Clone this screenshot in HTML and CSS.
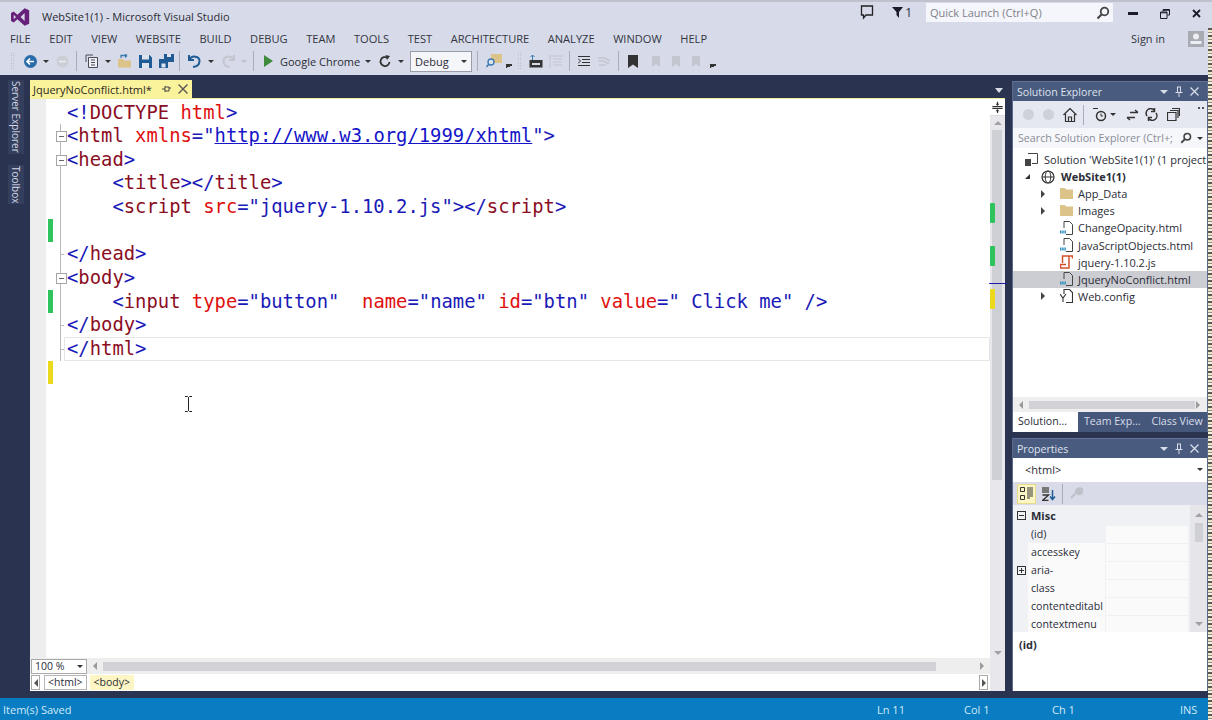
FILE: index.html
```html
<!DOCTYPE html>
<html lang="en">
<head>
    <meta charset="UTF-8">
    <meta name="viewport" content="width=device-width, initial-scale=1.0">
    <title>WebSite1(1) - Microsoft Visual Studio</title>
    <link rel="stylesheet" href="styles.css">
</head>
<body>
    <div class="titlebar">
        <svg class="logo" width="20" height="20" viewBox="0 0 22 20"><path d="M0 5.500 L3 4 L7 7.500 L15 0.500 L20 2.500 V17.500 L15 19.500 L7 12.500 L3 16 L0 14.500 Z M3 7.500 V12.500 L5.500 10 Z M15 5.500 L10.500 10 L15 14.500 Z" fill="#68217a" fill-rule="evenodd"/></svg>
        <span class="app-title">WebSite1(1) - Microsoft Visual Studio</span>
        <div class="title-right">
            <svg class="t-feedback" width="14" height="15" viewBox="0 0 14 15"><path d="M1.500 1 H12.500 V10 H6 L3.500 13 V10 H1.500 Z" fill="none" stroke="#222" stroke-width="1.300"/></svg>
            <svg class="t-filter" width="11" height="11" viewBox="0 0 11 11"><path d="M0 0 H11 L7 5 V11 L4.500 8 V5 Z" fill="#1b1b2a"/></svg>
            <span class="t-count">1</span>
            <div class="quick">
                <span>Quick Launch (Ctrl+Q)</span>
                <svg width="14" height="14" viewBox="0 0 14 14"><circle cx="8.500" cy="5.500" r="3.800" fill="none" stroke="#444" stroke-width="1.800"/><path d="M6 8 L1.500 12.500" stroke="#444" stroke-width="2.200"/></svg>
            </div>
            <div class="winbtns">
                <svg width="10" height="3" viewBox="0 0 10 3"><rect width="10" height="3" fill="#1b1b2a"/></svg>
                <svg width="10" height="10" viewBox="0 0 10 10"><path d="M3 2.500 V0.500 H9.500 V6 H7.500 M0.500 3 H7 V9.500 H0.500 Z M0.500 3.800 H7 M3 1.300 H9.500" fill="none" stroke="#1b1b2a"/></svg>
                <svg width="9" height="9" viewBox="0 0 9 9"><path d="M1 1 L8 8 M8 1 L1 8" stroke="#1b1b2a" stroke-width="1.800"/></svg>
            </div>
        </div>
    </div>

    <div class="menubar">
        <span>FILE</span><span>EDIT</span><span>VIEW</span><span>WEBSITE</span><span>BUILD</span><span>DEBUG</span><span>TEAM</span><span>TOOLS</span><span>TEST</span><span>ARCHITECTURE</span><span>ANALYZE</span><span>WINDOW</span><span>HELP</span>
        <div class="signin">
            <span>Sign in</span>
            <svg width="16" height="16" viewBox="0 0 16 16"><rect width="16" height="16" fill="#a9abb3"/><circle cx="8" cy="5.500" r="3" fill="#eceef4"/><path d="M2.500 13 V10 H13.500 V13 Z" fill="#eceef4"/></svg>
        </div>
    </div>

    <div class="toolbar">
        <div class="grip"></div>
        <svg class="g9" width="13" height="13" viewBox="0 0 13 13"><circle cx="6.500" cy="6.500" r="6.500" fill="#2a6ca8"/><path d="M3 6.500 H10 M6 3.500 L3 6.500 L6 9.500" stroke="#fff" stroke-width="1.600" fill="none"/></svg>
        <i class="caret g6"></i>
        <svg class="g7" width="13" height="13" viewBox="0 0 13 13"><circle cx="6.500" cy="6.500" r="6" fill="#ccced6"/><path d="M3 6.500 H10" stroke="#eceef4" stroke-width="1.600"/></svg>
        <i class="sep g7"></i>
        <svg class="g8" width="14" height="14" viewBox="0 0 14 14"><path d="M3.500 3.500 H12.500 V13.500 H3.500 Z M1 1 H8 M1 1 V8 M6 6 H10 M6 8.500 H10 M6 11 H10" fill="#eef0f6" stroke="#4a4d58"/></svg>
        <i class="caret g6"></i>
        <svg class="g6" width="15" height="14" viewBox="0 0 15 14"><path d="M1 5 H6 L7 6.500 H14 V13.500 H1 Z" fill="#dcc38a"/><path d="M4 4 V1.500 H10 M10 1.500 L8 0 M10 1.500 L8 3.500" stroke="#3d7cb0" stroke-width="1.300" fill="none"/></svg>
        <svg class="g7" width="13" height="13" viewBox="0 0 13 13"><path d="M0 0 H10.500 L13 2.500 V13 H0 Z" fill="#1f5c96"/><rect x="3" y="0" width="7" height="4.500" fill="#dfe3ee"/><rect x="3" y="8" width="7" height="5" fill="#dfe3ee"/></svg>
        <svg class="g7" width="15" height="14" viewBox="0 0 15 14"><path d="M5 0 H15 V8 H5 Z" fill="#1f5c96"/><rect x="8" y="0" width="4" height="3" fill="#dfe3ee"/><path d="M0 5 H9 V14 H0 Z" fill="#1f5c96"/><rect x="2.500" y="9.500" width="4" height="4" fill="#dfe3ee"/></svg>
        <i class="sep g5"></i>
        <svg class="g8" width="13" height="14" viewBox="0 0 13 14"><path d="M1 1 V6 H6 M1.500 5.500 C4 1 11.500 2 11.500 7 C11.500 10 9 12.500 5 13" fill="none" stroke="#1f5c96" stroke-width="2"/></svg>
        <i class="caret g7"></i>
        <svg class="g8" width="13" height="14" viewBox="0 0 13 14"><path d="M12 1 V6 H7 M11.500 5.500 C9 1 1.500 2 1.500 7 C1.500 10 4 12.500 8 13" fill="none" stroke="#c3c5cf" stroke-width="2"/></svg>
        <i class="caret light g6"></i>
        <i class="sep g6"></i>
        <svg class="g10" width="9" height="12" viewBox="0 0 9 12"><path d="M0 0 L9 6 L0 12 Z" fill="#3f8a3c"/></svg>
        <span class="tb-text g7">Google Chrome</span>
        <i class="caret g5"></i>
        <svg class="g8" width="12" height="13" viewBox="0 0 12 13"><path d="M8.500 2.800 A4.500 4.500 0 1 0 10.500 7" fill="none" stroke="#333" stroke-width="1.800"/><path d="M6.500 0 L11 1 L8 5 Z" fill="#333"/></svg>
        <i class="caret g7"></i>
        <div class="debug-box g6"><span>Debug</span><i class="caret"></i></div>
        <i class="sep g5"></i>
        <svg class="g8" width="16" height="14" viewBox="0 0 16 14"><rect x="5" y="0" width="11" height="9" fill="#dcc38a"/><circle cx="5" cy="8" r="3" fill="#dfe3ee" stroke="#3d7cb0" stroke-width="1.400"/><path d="M3 10 L0.500 13" stroke="#3d7cb0" stroke-width="1.600"/></svg>
        <i class="ovf g4"></i>
        <div class="grip g5"></div>
        <svg class="g7" width="14" height="13" viewBox="0 0 14 13"><path d="M3.500 0 V5 M1.500 2 L3.500 0 L5.500 2" stroke="#3d7cb0" fill="none"/><path d="M0.500 5 H13.500 V12.500 H0.500 Z M3 8 H11 V10 H3 Z" fill="#333" fill-rule="evenodd"/></svg>
        <svg class="g6" width="14" height="13" viewBox="0 0 14 13"><path d="M0 1 H14 M4 4 H13 M4 7 H13 M4 10 H13 M1 1 V13" stroke="#c3c5cf"/></svg>
        <i class="sep g6"></i>
        <svg class="g8" width="12" height="11" viewBox="0 0 12 11"><path d="M0 0.500 H12 M4 3.500 H12 M4 6.500 H12 M0 9.500 H12 M0 2.500 L2.500 5 L0 7.500" stroke="#333" fill="none"/></svg>
        <svg class="g8" width="12" height="11" viewBox="0 0 12 11"><path d="M0 2 H7 L12 5 M0 5 H6 L11 8 M1 9 H8" stroke="#c3c5cf" stroke-width="1.500" fill="none"/></svg>
        <i class="sep g8"></i>
        <svg class="g9" width="10" height="13" viewBox="0 0 10 13"><path d="M0 0 H10 V13 L5 9.500 L0 13 Z" fill="#333"/></svg>
        <svg class="g11" width="11" height="12" viewBox="0 0 11 12"><path d="M3 1 H11 V12 L7 9 L3 12 Z M0 1 L2 3 M3 0 L5 3" fill="#c3c5cf"/></svg>
        <svg class="g9" width="11" height="12" viewBox="0 0 11 12"><path d="M3 1 H11 V12 L7 9 L3 12 Z M0 1 L2 3 M3 0 L5 3" fill="#c3c5cf"/></svg>
        <svg class="g9" width="11" height="12" viewBox="0 0 11 12"><path d="M3 1 H11 V12 L7 9 L3 12 Z M0 1 L2 3 M3 0 L5 3" fill="#c3c5cf"/></svg>
        <i class="ovf g10"></i>
    </div>

    <div class="workspace">
        <div class="sidetabs">
            <span>Server Explorer</span>
            <span>Toolbox</span>
        </div>

        <div class="doc">
            <div class="tabstrip">
                <div class="doctab">
                    <span>JqueryNoConflict.html*</span>
                    <svg width="9" height="9" viewBox="0 0 9 9"><path d="M3 1 V7 M3 2 H7 V6 H3 M0 4 H3 M7 3 H9" fill="none" stroke="#444"/></svg>
                    <svg width="10" height="10" viewBox="0 0 9 9"><path d="M0.500 0.500 L8.500 8.500 M8.500 0.500 L0.500 8.500" stroke="#555" stroke-width="1.200"/></svg>
                </div>
                <i class="tab-arrow"></i>
            </div>
            <div class="editor">
                <div class="editor-left">
                    <div class="editor-main">
                        <div class="margin"></div>
                        <div class="lines">
                            <div class="line"><i class="chg"></i><i class="fold"></i><code><b class="bl">&lt;!</b><b class="mr">DOCTYPE</b> <b class="rd">html</b><b class="bl">&gt;</b></code></div>
                            <div class="line"><i class="chg"></i><i class="fold box"></i><code><b class="bl">&lt;</b><b class="mr">html</b> <b class="rd">xmlns</b><b class="bl">="</b><a class="url">http://www.w3.org/1999/xhtml</a><b class="bl">"&gt;</b></code></div>
                            <div class="line"><i class="chg"></i><i class="fold box"></i><code><b class="bl">&lt;</b><b class="mr">head</b><b class="bl">&gt;</b></code></div>
                            <div class="line"><i class="chg"></i><i class="fold"></i><code>    <b class="bl">&lt;</b><b class="mr">title</b><b class="bl">&gt;&lt;/</b><b class="mr">title</b><b class="bl">&gt;</b></code></div>
                            <div class="line"><i class="chg"></i><i class="fold"></i><code>    <b class="bl">&lt;</b><b class="mr">script</b> <b class="rd">src</b><b class="bl">="jquery-1.10.2.js"&gt;&lt;/</b><b class="mr">script</b><b class="bl">&gt;</b></code></div>
                            <div class="line"><i class="chg green"></i><i class="fold"></i><code> </code></div>
                            <div class="line"><i class="chg"></i><i class="fold end"></i><code><b class="bl">&lt;/</b><b class="mr">head</b><b class="bl">&gt;</b></code></div>
                            <div class="line"><i class="chg"></i><i class="fold box"></i><code><b class="bl">&lt;</b><b class="mr">body</b><b class="bl">&gt;</b></code></div>
                            <div class="line"><i class="chg green"></i><i class="fold"></i><code>    <b class="bl">&lt;</b><b class="mr">input</b> <b class="rd">type</b><b class="bl">="button"</b>  <b class="rd">name</b><b class="bl">="name"</b> <b class="rd">id</b><b class="bl">="btn"</b> <b class="rd">value</b><b class="bl">=" Click me"</b> <b class="bl">/&gt;</b></code></div>
                            <div class="line"><i class="chg"></i><i class="fold end"></i><code><b class="bl">&lt;/</b><b class="mr">body</b><b class="bl">&gt;</b></code></div>
                            <div class="line current"><i class="chg"></i><i class="fold end"></i><code><b class="bl">&lt;/</b><b class="mr">html</b><b class="bl">&gt;</b></code></div>
                            <div class="line"><i class="chg yellow"></i><i class="fold none"></i><code> </code></div>
                        </div>
                        <svg class="ibeam" width="7" height="16" viewBox="0 0 7 16"><path d="M0 0.500 H2.500 L3.500 1.500 L4.500 0.500 H7 M3.500 1.500 V14.500 M0 15.500 H2.500 L3.500 14.500 L4.500 15.500 H7" fill="none" stroke="#222"/></svg>
                    </div>
                    <div class="zoomrow">
                        <div class="zoombox"><span>100 %</span><i class="caret"></i></div>
                        <i class="arr-l"></i>
                        <div class="htrack"><div class="hthumb"></div></div>
                        <i class="arr-r"></i>
                    </div>
                    <div class="crumbs">
                        <div class="crumb-btn"><i class="arr-l small"></i></div>
                        <span class="crumb">&lt;html&gt;</span>
                        <span class="crumb on">&lt;body&gt;</span>
                        <div class="crumb-btn right"><i class="arr-r small"></i></div>
                    </div>
                </div>
                <div class="vscroll">
                    <svg class="split" width="15" height="17" viewBox="0 0 15 17"><path d="M2 8 H13 M2 10 H13 M7.500 3 V6 M7.500 12 V15" stroke="#333" stroke-width="1.200"/><path d="M5.500 5 H9.500 L7.500 7.500 Z M5.500 13 H9.500 L7.500 10.500 Z" fill="#333"/></svg>
                    <i class="up"></i>
                    <div class="vtrack">
                        <i class="vm g1"></i><i class="vm g2"></i><i class="vm caretline"></i><i class="vm y1"></i>
                    </div>
                    <i class="down"></i>
                </div>
            </div>
        </div>

        <div class="panels">
            <div class="panel solution">
                <div class="panel-title"><span>Solution Explorer</span><i class="pin-caret"></i><svg width="8" height="11" viewBox="0 0 8 11"><path d="M2 1 H6 M2.500 1 V6 M5.500 1 V6 M0.500 6.500 H7.500 M4 6.500 V11" stroke="#d8dde8" fill="none"/></svg><svg width="9" height="9" viewBox="0 0 9 9"><path d="M0.500 0.500 L8.500 8.500 M8.500 0.500 L0.500 8.500" stroke="#d8dde8" stroke-width="1.300"/></svg></div>
                <div class="se-tools">
                    <svg width="13" height="13" viewBox="0 0 13 13"><circle cx="6.500" cy="6.500" r="5.500" fill="#cfd1d9"/></svg>
                    <svg class="g7" width="13" height="13" viewBox="0 0 13 13"><circle cx="6.500" cy="6.500" r="5.500" fill="#cfd1d9"/></svg>
                    <svg class="g8" width="14" height="14" viewBox="0 0 14 14"><path d="M0.500 7 L7 0.500 L13.500 7 M2.500 6 V13.500 H11.500 V6 M5.500 13.500 V9 H8.500 V13.500" fill="none" stroke="#333" stroke-width="1.200"/></svg>
                    <i class="sep g6"></i>
                    <svg class="g9" width="14" height="14" viewBox="0 0 14 14"><circle cx="8" cy="8" r="4.500" fill="none" stroke="#333" stroke-width="1.500"/><path d="M8 5.500 V8 H10 M0 0.500 H5" stroke="#333" fill="none"/></svg>
                    <i class="caret g3"></i>
                    <svg class="g10" width="13" height="12" viewBox="0 0 13 12"><path d="M4 3.500 H12 M9 1 L12 3.500 M9 8.500 H1 M4 11 L1 8.500" fill="none" stroke="#333" stroke-width="1.500"/></svg>
                    <svg class="g6" width="13" height="13" viewBox="0 0 13 13"><path d="M2 8 A4.500 4.500 0 0 1 9.500 2.500 M11 5 A4.500 4.500 0 0 1 3.500 10.500 M9.500 0 V3.500 H6 M3.500 13 V9.500 H7" fill="none" stroke="#333" stroke-width="1.500"/></svg>
                    <svg class="g9" width="13" height="13" viewBox="0 0 13 13"><path d="M0.500 4.500 H9 V12.500 H0.500 Z M3 2.500 H11 V10 M5 0.500 H12.500 V8" fill="none" stroke="#333" stroke-width="1.200"/></svg>
                    <i class="dots"></i>
                </div>
                <div class="se-search"><span>Search Solution Explorer (Ctrl+;</span><svg width="12" height="12" viewBox="0 0 14 14"><circle cx="8.500" cy="5.500" r="3.800" fill="none" stroke="#444" stroke-width="1.800"/><path d="M6 8 L1.500 12.500" stroke="#444" stroke-width="2.200"/></svg><i class="caret"></i></div>
                <div class="tree">
                    <div class="node lvl0"><svg width="13" height="13" viewBox="0 0 13 13"><path d="M3 0.500 H12.500 V10.500 H7" fill="none" stroke="#444"/><rect x="0" y="6" width="6" height="7" fill="#444"/></svg><span>Solution 'WebSite1(1)' (1 project</span></div>
                    <div class="node lvl1"><i class="exp open"></i><svg width="14" height="14" viewBox="0 0 14 14"><circle cx="7" cy="7" r="6" fill="none" stroke="#333" stroke-width="1.200"/><ellipse cx="7" cy="7" rx="2.800" ry="6" fill="none" stroke="#333"/><path d="M1 7 H13" stroke="#333"/></svg><strong>WebSite1(1)</strong></div>
                    <div class="node lvl2"><i class="exp"></i><svg width="13" height="11" viewBox="0 0 13 11"><path d="M0 0 H5 L6 1.500 H13 V11 H0 Z" fill="#dcc38a"/></svg><span>App_Data</span></div>
                    <div class="node lvl2"><i class="exp"></i><svg width="13" height="11" viewBox="0 0 13 11"><path d="M0 0 H5 L6 1.500 H13 V11 H0 Z" fill="#dcc38a"/></svg><span>Images</span></div>
                    <div class="node lvl2"><i class="exp none"></i><svg width="13" height="14" viewBox="0 0 13 14"><path d="M4 7 V0.500 H9.500 L12.500 3.500 V13.500 H6" fill="none" stroke="#444"/><path d="M0 11 H6" stroke="#2e8fc0" stroke-width="3" stroke-dasharray="1.500 .7"/></svg><span>ChangeOpacity.html</span></div>
                    <div class="node lvl2"><i class="exp none"></i><svg width="13" height="14" viewBox="0 0 13 14"><path d="M4 7 V0.500 H9.500 L12.500 3.500 V13.500 H6" fill="none" stroke="#444"/><path d="M0 11 H6" stroke="#2e8fc0" stroke-width="3" stroke-dasharray="1.500 .7"/></svg><span>JavaScriptObjects.html</span></div>
                    <div class="node lvl2"><i class="exp none"></i><svg width="13" height="14" viewBox="0 0 13 14"><path d="M2.500 8 V1 H12.500 V3.500 M9 1 V13 H0.500 V9.500 H6" fill="none" stroke="#d2502a" stroke-width="1.500"/></svg><span>jquery-1.10.2.js</span></div>
                    <div class="node lvl2 sel"><i class="exp none"></i><svg width="13" height="14" viewBox="0 0 13 14"><path d="M4 7 V0.500 H9.500 L12.500 3.500 V13.500 H6" fill="none" stroke="#444"/><path d="M0 11 H6" stroke="#2e8fc0" stroke-width="3" stroke-dasharray="1.500 .7"/></svg><span>JqueryNoConflict.html</span></div>
                    <div class="node lvl2"><i class="exp"></i><svg width="13" height="14" viewBox="0 0 13 14"><path d="M4 5 V0.500 H9.500 L12.500 3.500 V13.500 H6 M0 5 L3 9 L6 5 M3 9 V13" fill="none" stroke="#333" stroke-width="1.100"/></svg><span>Web.config</span></div>
                </div>
                <div class="se-scroll"><i class="arr-l"></i><div class="se-thumb"></div><i class="arr-r"></i></div>
                <div class="paneltabs"><span class="on">Solution...</span><span class="team">Team Exp...</span><span class="classv">Class View</span></div>
            </div>
            <div class="panel props">
                <div class="panel-title"><span>Properties</span><i class="pin-caret"></i><svg width="8" height="11" viewBox="0 0 8 11"><path d="M2 1 H6 M2.500 1 V6 M5.500 1 V6 M0.500 6.500 H7.500 M4 6.500 V11" stroke="#d8dde8" fill="none"/></svg><svg width="9" height="9" viewBox="0 0 9 9"><path d="M0.500 0.500 L8.500 8.500 M8.500 0.500 L0.500 8.500" stroke="#d8dde8" stroke-width="1.300"/></svg></div>
                <div class="p-combo"><span>&lt;html&gt;</span><i class="caret"></i></div>
                <div class="p-tools">
                    <div class="p-active"><svg width="13" height="13" viewBox="0 0 13 13"><path d="M0.500 0.500 H4.500 V4.500 H0.500 Z M0.500 8.500 H4.500 V12.500 H0.500 Z M7 1 H13 M7 3 H13 M7 5 H13 M7 7 H13 M7 9 H13 M7 11 H10" fill="none" stroke="#333"/></svg></div>
                    <svg class="g6" width="14" height="14" viewBox="0 0 14 14"><rect x="0" y="0" width="7" height="6" fill="#777"/><path d="M0.500 8 H6.500 L0.500 13.500 H6.500" fill="none" stroke="#333" stroke-width="1.400"/><path d="M10.500 3 V12 M8 9.500 L10.500 12.500 L13 9.500" fill="none" stroke="#1f5c96" stroke-width="1.500"/></svg>
                    <i class="sep g6"></i>
                    <svg class="g7" width="13" height="13" viewBox="0 0 13 13"><path d="M1 11 L6 6 M6 6 C5 3 8 0.500 11 1.500 L9 4 L11 5 L12.500 3 C13 6.500 10 8 7.500 7" stroke="#bfc1ca" stroke-width="2" fill="#bfc1ca"/></svg>
                </div>
                <div class="p-grid">
                    <div class="p-rows">
                        <div class="p-row head"><i class="pm minus"></i><strong>Misc</strong></div>
                        <div class="p-row"><i class="pm blank"></i><span class="p-name">(id)</span><span class="p-val"></span></div>
                        <div class="p-row"><i class="pm blank"></i><span class="p-name lit">accesskey</span><span class="p-val"></span></div>
                        <div class="p-row"><i class="pm plus"></i><span class="p-name lit">aria-</span><span class="p-val"></span></div>
                        <div class="p-row"><i class="pm blank"></i><span class="p-name lit">class</span><span class="p-val"></span></div>
                        <div class="p-row"><i class="pm blank"></i><span class="p-name lit">contenteditabl</span><span class="p-val"></span></div>
                        <div class="p-row"><i class="pm blank"></i><span class="p-name lit">contextmenu</span><span class="p-val"></span></div>
                    </div>
                    <div class="p-scroll"><i class="up"></i><div class="p-thumb"></div><i class="down"></i></div>
                </div>
                <div class="p-desc"><strong>(id)</strong></div>
            </div>
        </div>
    </div>

    <div class="statusbar">
        <span class="st-main">Item(s) Saved</span>
        <span class="st-ln">Ln 11</span>
        <span class="st-col">Col 1</span>
        <span class="st-ch">Ch 1</span>
        <span class="st-ins">INS</span>
    </div>
</body>
</html>
```

FILE: styles.css
```css
*{
    margin: 0;
    padding: 0;
    box-sizing: border-box;
}
html,body{
    height: 720px;
    overflow: hidden;
}
body{
    position: relative;
    display: flex;
    flex-direction: column;
    width: 1212px;
    background-color: #d7dbe9;
    font-family: "Open Sans", "Noto Sans", sans-serif;
    font-size: 11px;
    color: #2a2c36;
}
/* noisy strip down the right edge of the capture */
body::after{
    content: "";
    position: absolute;
    top: 28px;
    right: 0;
    bottom: 0;
    width: 4px;
    background: repeating-linear-gradient(#5a5a50 0, #5a5a50 2px, #efe6c8 2px, #efe6c8 4px, #8d8d84 4px, #8d8d84 5px, #f6f2e2 5px, #f6f2e2 7px);
}
i{
    display: block;
    flex: none;
}
svg{
    flex: none;
}

/* spacing steps used in the tool rows */
.g3{margin-left: 3px;}
.g4{margin-left: 4px;}
.g5{margin-left: 5px;}
.g6{margin-left: 6px;}
.g7{margin-left: 7px;}
.g8{margin-left: 8px;}
.g9{margin-left: 9px;}
.g10{margin-left: 10px;}
.g11{margin-left: 11px;}

/* title bar */
.titlebar{
    display: flex;
    align-items: center;
    flex: none;
    height: 28px;
    padding-left: 11px;
    border-top: 2px solid #bfc2cd;
}
.logo{
    margin: 3px 11px 0 0;
}
.app-title{
    margin-top: 3px;
}
.title-right{
    display: flex;
    align-items: center;
    align-self: flex-start;
    margin-left: auto;
    padding: 1px 11px 0 0;
}
.t-feedback{
    margin-right: 18px;
}
.t-filter{
    margin-right: 2px;
}
.t-count{
    margin-right: 14px;
    font-size: 12px;
}
.quick{
    display: flex;
    justify-content: space-between;
    align-items: center;
    width: 187px;
    height: 19px;
    padding: 0 3px 0 4px;
    background-color: #f5f6fb;
    color: #7d7f89;
}
.winbtns{
    display: flex;
    align-items: center;
    gap: 22px;
    margin: 2px 0 0 15px;
}

/* menu */
.menubar{
    display: flex;
    align-items: center;
    flex: none;
    height: 21px;
    padding-left: 10px;
    font-size: 11.100px;
    color: #33353f;
}
.menubar > span{
    margin-right: 18.500px;
}
.signin{
    display: flex;
    align-items: center;
    gap: 23px;
    margin-left: auto;
    padding-right: 8px;
    font-size: 11px;
}

/* toolbar */
.toolbar{
    display: flex;
    align-items: center;
    flex: none;
    height: 26px;
    padding: 0 0 2px 10px;
}
.grip{
    width: 5px;
    height: 18px;
    background-image: radial-gradient(#a5a8b4 35%, transparent 40%);
    background-size: 2.500px 2.500px;
}
.caret{
    width: 6px;
    height: 0;
    border-left: 3px solid transparent;
    border-right: 3px solid transparent;
    border-top: 3px solid #333;
}
.caret.light{
    border-top-color: #bfc1ca;
}
.sep{
    width: 1px;
    height: 20px;
    background-color: #a9acb9;
}
.tb-text{
    width: 80px;
    white-space: nowrap;
}
.debug-box{
    display: flex;
    align-items: center;
    justify-content: space-between;
    width: 62px;
    height: 21px;
    padding: 0 4px;
    background-color: #f5f6fa;
    border: 1px solid #9a9da9;
}
.ovf{
    width: 6px;
    height: 5px;
    margin-top: 11px;
    border-top: 1px solid #333;
    background: linear-gradient(160deg, #333 45%, transparent 50%);
}

/* main area */
.workspace{
    display: flex;
    flex: none;
    height: 623px;
    background-color: #2a3350;
}
.sidetabs{
    display: flex;
    flex-direction: column;
    gap: 11px;
    flex: none;
    width: 30px;
    padding: 5px 0 0 8px;
    color: #d4d8e4;
    font-size: 10px;
}
.sidetabs span{
    width: 16px;
    padding: 1px 0;
    background-color: #343f5e;
    writing-mode: vertical-lr;
    line-height: 16px;
}
.doc{
    display: flex;
    flex-direction: column;
    flex: none;
    width: 975px;
    padding-bottom: 7px;
}
.tabstrip{
    display: flex;
    align-items: flex-end;
    justify-content: space-between;
    flex: none;
    height: 24px;
    border-bottom: 1px solid #f3ef9c;
}
.doctab{
    display: flex;
    align-items: center;
    width: 162px;
    height: 18px;
    padding-left: 3px;
    background-color: #fbf29c;
    color: #2b2a20;
}
.doctab span{
    width: 129px;
}
.doctab svg + svg{
    margin-left: 7px;
}
.tab-arrow{
    width: 0;
    height: 0;
    margin: 0 2px 5px 0;
    border-left: 4px solid transparent;
    border-right: 4px solid transparent;
    border-top: 5px solid #d8dce6;
}

/* editor */
.editor{
    display: flex;
    flex: 1;
    min-height: 0;
    background-color: #fff;
}
.editor-left{
    display: flex;
    flex-direction: column;
    flex: none;
    width: 960px;
}
.editor-main{
    position: relative;
    display: flex;
    flex: 1;
    min-height: 0;
}
.margin{
    flex: none;
    width: 16px;
    background-color: #eeeeee;
}
.lines{
    flex: 1;
    padding-top: 1.500px;
}
.line{
    display: flex;
    height: 23.670px;
}
.line.current code{
    outline: 1px solid #e6e6e6;
    outline-offset: -1px;
}
.chg{
    width: 5px;
    margin-left: 2px;
}
.chg.green{
    background-color: #2ec35c;
}
.chg.yellow{
    background-color: #ecd91c;
}
.fold{
    position: relative;
    width: 14px;
}
.fold::before{
    content: "";
    position: absolute;
    top: 0;
    bottom: 0;
    left: 7px;
    border-left: 1px solid #b9b9b9;
}
.fold.none::before{
    display: none;
}
.line:first-child .fold::before{
    display: none;
}
.fold.end::after{
    content: "";
    position: absolute;
    left: 7px;
    top: 12px;
    width: 4px;
    border-top: 1px solid #b9b9b9;
}
.fold.box::after{
    content: "";
    position: absolute;
    left: 3px;
    top: 7px;
    width: 9px;
    height: 9px;
    border: 1px solid #a5a5a5;
    background: linear-gradient(#666, #666) center / 5px 1px no-repeat #fff;
}
code{
    flex: 1;
    margin-left: -3px;
    padding-left: 3px;
    font-family: "DejaVu Sans Mono", monospace;
    font-size: 18.850px;
    line-height: 23.670px;
    white-space: pre;
    color: #1a1ab8;
}
code b{
    font-weight: normal;
}
.bl{
    color: #1a1ab8;
}
.mr{
    color: #8b0e1f;
}
.rd{
    color: #e01010;
}
.url{
    color: #1414c8;
    text-decoration: underline;
}
.ibeam{
    position: absolute;
    left: 155px;
    top: 297px;
}

/* vertical scrollbar with change marks */
.vscroll{
    display: flex;
    flex-direction: column;
    align-items: center;
    flex: none;
    width: 15px;
    background-color: #e8e8ec;
}
.split{
    background-color: #fff;
    border-bottom: 1px solid #dcdce2;
}
.up{
    width: 0;
    height: 0;
    margin: 5px 0 5px;
    border-left: 4px solid transparent;
    border-right: 4px solid transparent;
    border-bottom: 4px solid #a0a0a6;
}
.down{
    width: 0;
    height: 0;
    margin: 5px 0 36px;
    border-left: 4px solid transparent;
    border-right: 4px solid transparent;
    border-top: 4px solid #a0a0a6;
}
.vtrack{
    position: relative;
    flex: 1;
    width: 100%;
    background: linear-gradient(#cfd0d6, #cfd0d6) 2px 0 / 10px 350px no-repeat;
}
.vm{
    position: absolute;
    left: 0;
    width: 4.500px;
    height: 20px;
    border-radius: 1px;
}
.vm.g1{
    top: 73px;
    background-color: #2ec35c;
}
.vm.g2{
    top: 116px;
    background-color: #2ec35c;
}
.vm.y1{
    top: 159px;
    background-color: #ecd91c;
}
.vm.caretline{
    top: 153px;
    left: -1px;
    width: 18px;
    height: 1px;
    background-color: #1c1ca8;
}

/* editor bottom rows */
.zoomrow{
    display: flex;
    align-items: center;
    flex: none;
    height: 16px;
    padding-left: 1px;
    background-color: #eeeeee;
}
.zoombox{
    display: flex;
    align-items: center;
    justify-content: space-between;
    flex: none;
    width: 56px;
    height: 15px;
    padding: 0 3px;
    background-color: #fff;
    border: 1px solid #a9a9a9;
    font-size: 10.500px;
}
.arr-l{
    width: 0;
    height: 0;
    margin: 0 6px;
    border-top: 4px solid transparent;
    border-bottom: 4px solid transparent;
    border-right: 4px solid #9a9a9a;
}
.arr-r{
    width: 0;
    height: 0;
    margin: 0 6px 0 1px;
    border-top: 4px solid transparent;
    border-bottom: 4px solid transparent;
    border-left: 4px solid #9a9a9a;
}
.arr-l.small,
.arr-r.small{
    margin: 0;
    border-right-color: #555;
    border-left-color: #555;
}
.htrack{
    flex: 1;
}
.hthumb{
    width: 833px;
    height: 9px;
    background-color: #d2d2d6;
}
.crumbs{
    display: flex;
    align-items: center;
    flex: none;
    gap: 3px;
    height: 17px;
    padding-left: 1px;
    background-color: #fff;
}
.crumb-btn{
    display: flex;
    align-items: center;
    justify-content: center;
    width: 9px;
    height: 15px;
    margin-right: 1px;
    border: 1px solid #a9a9a9;
}
.crumb-btn.right{
    margin-left: auto;
    margin-right: 2px;
}
.crumb{
    padding: 0 3px;
    line-height: 13px;
    border: 1px solid #b5b5b5;
    font-size: 10.500px;
}
.crumb.on{
    background-color: #fdf6c4;
    border-color: #fdf6c4;
}

/* panels */
.panels{
    display: flex;
    flex-direction: column;
    gap: 6px;
    flex: none;
    width: 196px;
    margin-left: 7px;
    padding: 6px 0 7px;
}
.panel{
    display: flex;
    flex-direction: column;
    background-color: #fff;
    border-left: 1px solid #5b6a8c;
    border-right: 1px solid #5b6a8c;
    overflow: hidden;
}
.solution{
    flex: none;
    height: 351px;
}
.props{
    flex: 1;
}
.panel-title{
    display: flex;
    align-items: center;
    flex: none;
    gap: 7px;
    height: 20px;
    padding: 0 8px 0 4px;
    background-color: #4a5b80;
    border-top: 1px solid #64739a;
    color: #dfe3ec;
    font-size: 10.600px;
}
.panel-title span{
    margin-right: auto;
}
.pin-caret{
    width: 0;
    height: 0;
    border-left: 4px solid transparent;
    border-right: 4px solid transparent;
    border-top: 4px solid #d8dde8;
}
.se-tools{
    display: flex;
    align-items: center;
    flex: none;
    height: 27px;
    padding-left: 9px;
    background-color: #e6e8f1;
}
.dots{
    width: 6px;
    height: 2px;
    margin: -14px 3px 0 auto;
    background-image: linear-gradient(90deg, #555 2px, transparent 2px);
    background-size: 4px 2px;
}
.se-search{
    display: flex;
    align-items: center;
    flex: none;
    gap: 5px;
    height: 20px;
    padding-left: 5px;
    background-color: #f6f7fb;
    color: #8a8c95;
    font-size: 10.700px;
    white-space: nowrap;
    overflow: hidden;
}
.se-search span{
    flex: none;
    width: 157px;
    overflow: hidden;
}
.tree{
    flex: 1;
    padding-top: 3px;
    overflow: hidden;
}
.node{
    display: flex;
    align-items: center;
    height: 17.100px;
    white-space: nowrap;
}
.node svg{
    margin-right: 5px;
}
.lvl0{
    padding-left: 12px;
}
.lvl0 svg,
.lvl1 svg{
    margin-right: 6px;
}
.lvl1{
    padding-left: 12px;
}
.lvl2{
    padding-left: 28px;
}
.node.sel{
    background-color: #cccdd2;
}
.exp{
    width: 0;
    height: 0;
    margin-right: 15px;
    border-top: 4px solid transparent;
    border-bottom: 4px solid transparent;
    border-left: 4px solid #444;
}
.exp.none{
    border-left-color: transparent;
}
.exp.open{
    margin-right: 11px;
    border-top: none;
    border-left: 5px solid transparent;
    border-bottom: 5px solid #333;
}
.se-scroll{
    display: flex;
    align-items: center;
    flex: none;
    height: 15px;
    padding-right: 1px;
    background-color: #eeeeee;
}
.se-thumb{
    flex: 1;
    height: 8px;
    background-color: #d2d2d6;
}
.paneltabs{
    display: flex;
    flex: none;
    height: 20px;
    background-color: #46577c;
    color: #d9deea;
    font-size: 10.600px;
    line-height: 18px;
    white-space: nowrap;
}
.paneltabs .on{
    width: 65px;
    padding-left: 5px;
    background-color: #fff;
    color: #2a2c36;
}
.team{
    margin-left: 6px;
}
.classv{
    margin-left: 11px;
}

/* properties */
.p-combo{
    display: flex;
    align-items: center;
    justify-content: space-between;
    flex: none;
    height: 24px;
    padding: 0 4px 2px 12px;
}
.p-tools{
    display: flex;
    align-items: center;
    flex: none;
    height: 23px;
    padding-left: 4px;
    background-color: #d9dce8;
}
.p-active{
    display: flex;
    align-items: center;
    justify-content: center;
    width: 19px;
    height: 20px;
    background-color: #fbf6c4;
    border: 1px solid #e6dc8a;
}
.p-grid{
    display: flex;
    flex: none;
    height: 127px;
    background-color: #f0f1f5;
    overflow: hidden;
}
.p-rows{
    flex: 1;
    padding-top: 2px;
}
.p-row{
    display: flex;
    align-items: center;
    height: 18px;
    font-size: 10.600px;
}
.p-row.head{
    padding-bottom: 2px;
    font-size: 11px;
}
.pm{
    width: 9px;
    height: 9px;
    margin: 0 5px 0 4px;
}
.pm.minus,
.pm.plus{
    border: 1px solid #333;
    background: linear-gradient(#333, #333) center / 5px 1px no-repeat;
}
.pm.plus{
    background: linear-gradient(#333, #333) center / 5px 1px no-repeat, linear-gradient(#333, #333) center / 1px 5px no-repeat;
}
.p-name{
    flex: none;
    width: 77px;
    height: 100%;
    margin-left: -3px;
    padding-left: 3px;
    line-height: 18px;
    overflow: hidden;
    white-space: nowrap;
}
.p-name.lit{
    background-color: #fafafb;
}
.p-val{
    flex: none;
    width: 82px;
    height: 17px;
    margin-left: 1px;
    background-color: #fafafb;
}
.p-scroll{
    display: flex;
    flex-direction: column;
    align-items: center;
    flex: none;
    width: 17px;
    background-color: #e6e6ea;
}
.p-scroll .up{
    margin: 8px 0 6px;
}
.p-scroll .down{
    margin: auto 0 6px;
}
.p-thumb{
    flex: none;
    width: 8px;
    height: 19px;
    background-color: #cfd0d6;
}
.p-desc{
    flex: 1;
    padding: 5px 6px;
}

/* status bar */
.statusbar{
    display: flex;
    align-items: center;
    flex: none;
    height: 22px;
    background-color: #0a7cc2;
    color: #cfeaf8;
}
.st-main{
    width: 877px;
    padding-left: 3px;
}
.st-ln{
    width: 87px;
}
.st-col{
    width: 88px;
}
.st-ch{
    width: 128px;
}
```
